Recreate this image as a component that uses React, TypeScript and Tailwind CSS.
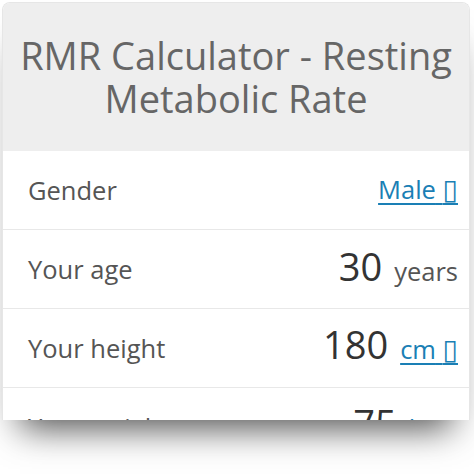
const Tofu = () => (
  <span className="font-['DejaVu_Sans',sans-serif] text-[28px]">{"\u25AF"}</span>
);

const Row = ({ label, children }: { label: string; children: React.ReactNode }) => (
  <div className="h-[79px] flex items-center justify-between pl-[25px] pr-[11px] border-b border-[#e8e8e8] shrink-0">
    <span className="text-[25.5px] text-[#555]">{label}</span>
    <div className="flex items-baseline gap-[12px]">{children}</div>
  </div>
);

const Unit = ({ text }: { text: string }) => (
  <a className="text-[25.5px] text-[#1a7fb5] underline underline-offset-[4px] decoration-[1.5px]">
    {text}{"\u00a0"}<Tofu />
  </a>
);

export default function App() {
  return (
    <div className="w-[474px] h-[474px] bg-white pt-[2px] px-[2px] font-['Open_Sans',sans-serif]">
      <div className="w-[468px] h-[418px] rounded-t-[8px] overflow-hidden flex flex-col bg-white border-x border-t border-[#e6e6e6] shadow-[0_26px_34px_-18px_rgba(0,0,0,0.7)]">
        <div className="h-[148px] shrink-0 bg-[#eeeeee] flex items-center justify-center text-center px-3">
          <h1 className="text-[38px] leading-[43px] text-[#666]">RMR Calculator - Resting Metabolic Rate</h1>
        </div>
        <Row label="Gender">
          <Unit text="Male" />
        </Row>
        <Row label="Your age">
          <span className="text-[38px] text-[#333] leading-none">30</span>
          <span className="text-[25.5px] text-[#555]">years</span>
        </Row>
        <Row label="Your height">
          <span className="text-[38px] text-[#333] leading-none">180</span>
          <Unit text="cm" />
        </Row>
        <Row label="Your weight">
          <span className="text-[38px] text-[#333] leading-none">75</span>
          <Unit text="kg" />
        </Row>
      </div>
    </div>
  );
}
